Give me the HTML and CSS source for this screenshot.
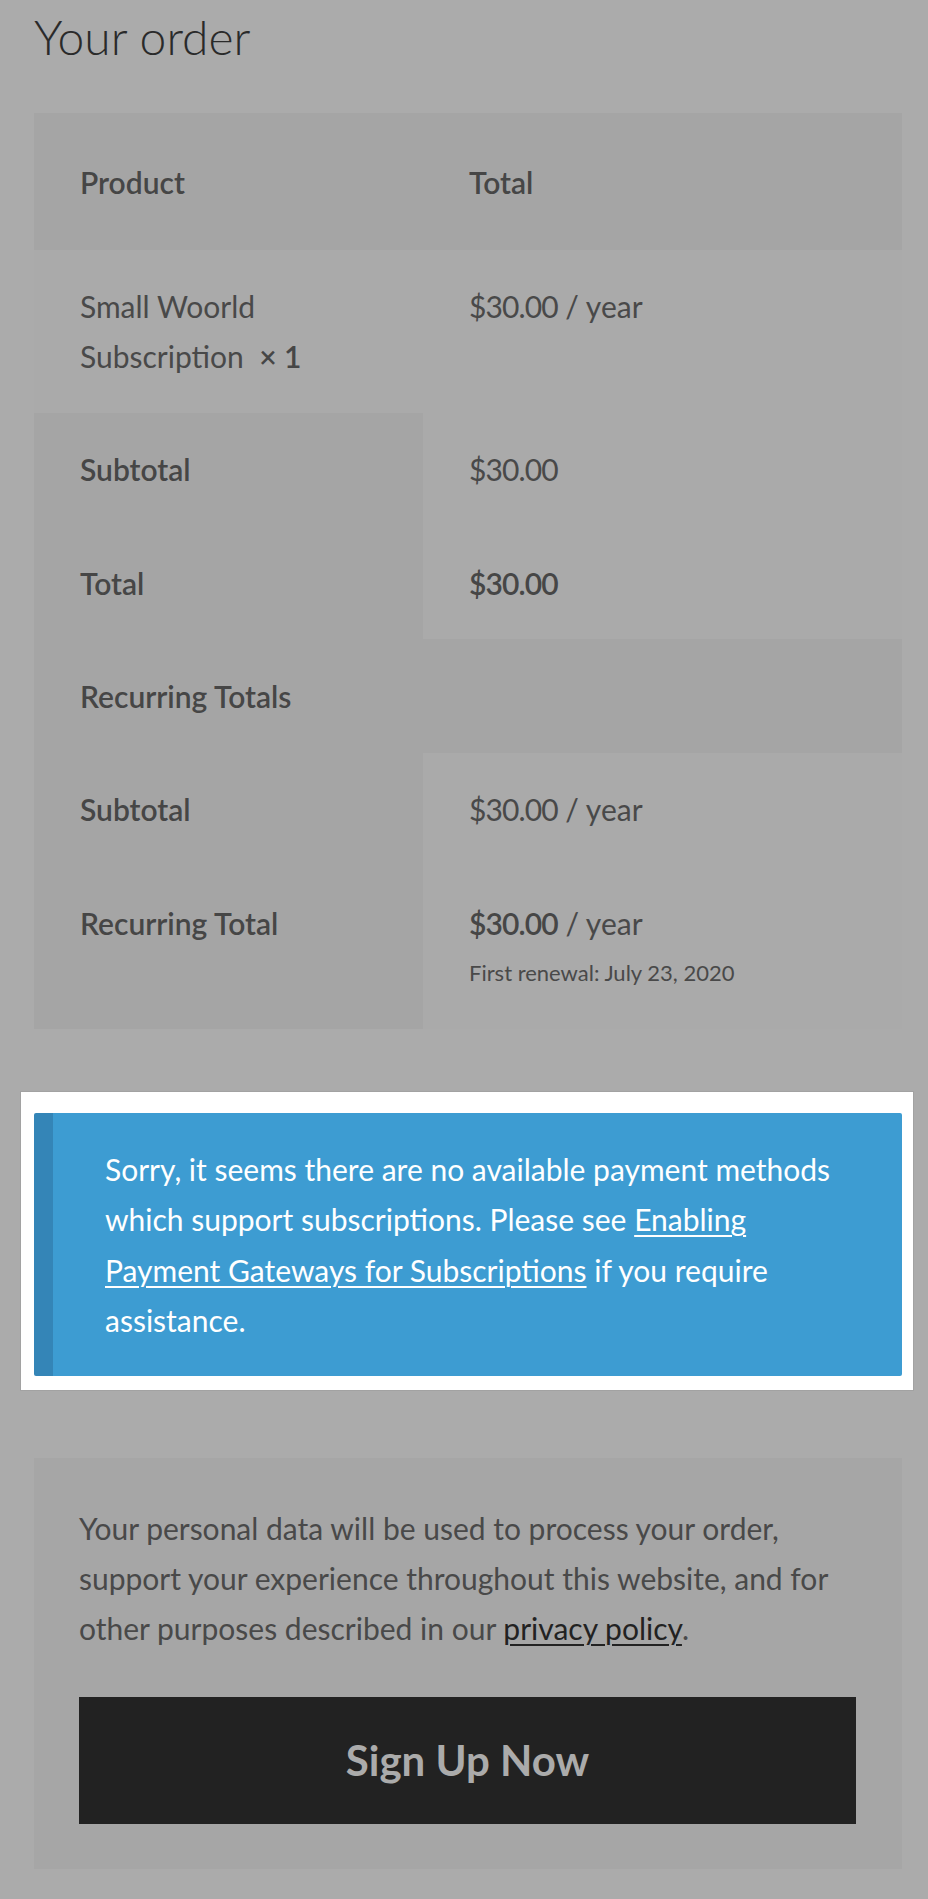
FILE: index.html
```html
<!DOCTYPE html>
<html lang="en">
<head>
<meta charset="utf-8">
<title>Your order</title>
<link rel="stylesheet" href="styles.css">
</head>
<body>
<div class="page">
  <h3 class="order-title">Your order</h3>
  <table class="order-table">
    <colgroup><col class="col-label"><col class="col-value"></colgroup>
    <thead>
      <tr><th>Product</th><th>Total</th></tr>
    </thead>
    <tbody>
      <tr>
        <td>Small Woorld Subscription&nbsp; <strong class="qty">×&nbsp;1</strong></td>
        <td><span class="amount">$30.00</span> / year</td>
      </tr>
    </tbody>
    <tfoot>
      <tr><th>Subtotal</th><td><span class="amount">$30.00</span></td></tr>
      <tr><th>Total</th><td><strong class="amount">$30.00</strong></td></tr>
      <tr class="recurring-head"><th colspan="2">Recurring Totals</th></tr>
      <tr><th>Subtotal</th><td><span class="amount">$30.00</span> / year</td></tr>
      <tr>
        <th>Recurring Total</th>
        <td><strong class="amount">$30.00</strong> / year<div class="renewal"><small>First renewal: July 23, 2020</small></div></td>
      </tr>
    </tfoot>
  </table>

  <div class="spotlight">
    <div class="notice">Sorry, it seems there are no available payment methods which support subscriptions. Please see <a href="#">Enabling Payment Gateways for Subscriptions</a> if you require assistance.</div>
  </div>

  <div class="payment">
    <p class="privacy">Your personal data will be used to process your order, support your experience throughout this website, and for other purposes described in our <a href="#">privacy policy</a>.</p>
    <button class="place-order" type="button">Sign Up Now</button>
  </div>
</div>
</body>
</html>
```

FILE: styles.css
```css
* { box-sizing: border-box; }

html, body {
  margin: 0;
  padding: 0;
}

body {
  background: #ababab;
  font-family: Lato, "Noto Sans", sans-serif;
  color: #494949;
  font-size: 30px;
  line-height: 50.16px;
}

.page {
  padding: 6px 26px 31px 34px;
}

.order-title {
  margin: 0 0 45px;
  font-size: 48px;
  font-weight: 300;
  line-height: 62px;
  color: #2a2a2a;
}

.order-table {
  width: 100%;
  border-collapse: separate;
  border-spacing: 0;
  table-layout: fixed;
  margin: 0 0 63px;
}

.col-label { width: 389px; }

.order-table th,
.order-table td {
  padding: 31.1px 46px;
  text-align: left;
  vertical-align: top;
  font-size: 30px;
  line-height: 50.16px;
}

.order-table tfoot th,
.order-table tfoot td {
  padding-top: 31.6px;
  padding-bottom: 31.6px;
}

.order-table th {
  background: #a5a5a5;
  font-weight: 600;
  color: #464646;
}

.order-table td {
  background: #aaaaaa;
}

.order-table thead th {
  padding: 43.5px 46px;
  vertical-align: middle;
}

.amount { letter-spacing: -0.9px; }

.qty,
strong.amount {
  font-weight: 600;
  color: #464646;
}

.renewal {
  font-size: 22px;
  line-height: 48.5px;
  padding-top: 1px;
}

.renewal small {
  font-size: inherit;
  letter-spacing: 0;
}

.spotlight {
  background: #ffffff;
  margin: 0 -11px 0 -13.4px;
  padding: 21.4px 11px 14.6px 13.4px;
  box-shadow: 0 0 0 1px rgba(0, 0, 0, 0.05);
}

.notice {
  background: #3d9cd2;
  color: #ffffff;
  border-left: 19px solid #3485b7;
  border-radius: 2px;
  padding: 31px 46px 31px 52px;
}

.notice a {
  color: #ffffff;
  text-decoration: underline;
  text-underline-offset: 4px;
  text-decoration-thickness: 2px;
}

.payment {
  margin-top: 67.4px;
  background: #a6a6a6;
  padding: 45px 46px 45px 45px;
}

.privacy {
  margin: 0 0 44px;
}

.privacy a {
  color: #222222;
  text-decoration: underline;
  text-underline-offset: 4px;
  text-decoration-thickness: 2px;
}

.place-order {
  display: block;
  width: 100%;
  height: 127px;
  padding: 0;
  border: none;
  background: #222222;
  color: #ababab;
  font-family: Lato, "Noto Sans", sans-serif;
  font-size: 42px;
  font-weight: 700;
  line-height: 127px;
  text-align: center;
}
```
